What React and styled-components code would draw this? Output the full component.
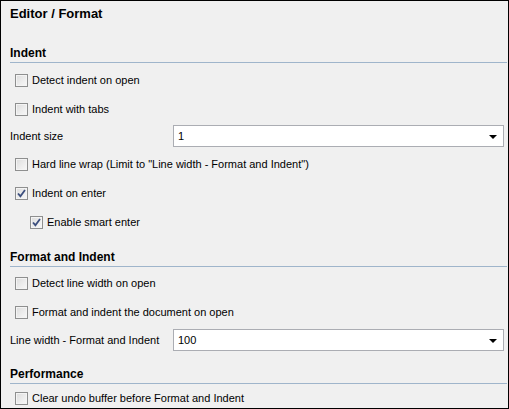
import React, { useState } from "react";
import styled, { createGlobalStyle } from "styled-components";

const GlobalStyle = createGlobalStyle`
  html, body {
    margin: 0;
    padding: 0;
    background: #f0f0f0;
  }
  * {
    box-sizing: border-box;
  }
`;

const Panel = styled.div`
  width: 509px;
  height: 409px;
  border: 1px solid #000;
  background: #f0f0f0;
  font-family: "Liberation Sans", Arial, sans-serif;
  font-size: 11px;
  color: #000;
  display: flex;
  flex-direction: column;
  overflow: hidden;
  padding-left: 9px;
`;

const Title = styled.div`
  height: 32px;
  flex: none;
  padding-top: 5px;
  font-size: 13px;
  font-weight: bold;
  line-height: 15px;
`;

const SectionHeader = styled.div`
  height: 30px;
  flex: none;
  display: flex;
  align-items: flex-end;
  padding-bottom: 2px;
  border-bottom: 1px solid #9fb5cb;
  font-size: 12px;
  font-weight: bold;
  line-height: 14px;
  margin-right: 1px;
`;

const Section = styled.div`
  display: flex;
  flex-direction: column;
  flex: none;
  padding-top: ${({ $top }) => $top}px;
`;

const CheckRow = styled.label`
  height: 29px;
  flex: none;
  display: flex;
  align-items: center;
  gap: 4px;
  padding-left: ${({ $level }) => 5 + ($level || 0) * 15}px;
  line-height: 13px;
  white-space: nowrap;
  cursor: default;
`;

const Box = styled.span`
  width: 13px;
  height: 13px;
  flex: none;
  border: 1px solid #8e8f8f;
  background: linear-gradient(135deg, #dcdcdc 0%, #eeeeee 60%, #f8f8f8 100%);
  box-shadow: inset 0 0 0 1px #f4f4f4;
  display: flex;
  align-items: center;
  justify-content: center;
`;

const FieldRow = styled.div`
  height: ${({ $height }) => $height}px;
  flex: none;
  display: flex;
  align-items: flex-start;
  padding-top: ${({ $top }) => $top}px;
`;

const FieldLabel = styled.span`
  width: 163px;
  flex: none;
  line-height: 22px;
  white-space: nowrap;
`;

const Select = styled.div`
  width: 331px;
  height: 22px;
  border: 1px solid #abadb3;
  background: #fff;
  display: flex;
  align-items: center;
  justify-content: space-between;
  padding: 0 6px 0 4px;
`;

const Arrow = styled.span`
  width: 0;
  height: 0;
  border-left: 4px solid transparent;
  border-right: 4px solid transparent;
  border-top: 4px solid #000;
  margin-top: 2px;
`;

const Checkbox = ({ label, checked, level }) => {
  const [on, setOn] = useState(!!checked);
  return (
    <CheckRow $level={level} onClick={() => setOn(!on)}>
      <Box>
        {on && (
          <svg width="9" height="9" viewBox="0 0 9 9">
            <path d="M1 4.5 L3.4 7.2 L8 1" fill="none" stroke="#3c4f7e" strokeWidth="1.8" />
          </svg>
        )}
      </Box>
      {label}
    </CheckRow>
  );
};

const Field = ({ label, value, top, height }) => (
  <FieldRow $top={top} $height={height}>
    <FieldLabel>{label}</FieldLabel>
    <Select>
      {value}
      <Arrow />
    </Select>
  </FieldRow>
);

export default function App() {
  return (
    <>
      <GlobalStyle />
      <Panel>
        <Title>Editor / Format</Title>

        <SectionHeader>Indent</SectionHeader>
        <Section $top={3}>
          <Checkbox label="Detect indent on open" />
          <Checkbox label="Indent with tabs" />
          <Field label="Indent size" value="1" top={1} height={26} />
          <Checkbox label={'Hard line wrap (Limit to "Line width - Format and Indent")'} />
          <Checkbox label="Indent on enter" checked />
          <Checkbox label="Enable smart enter" checked level={1} />
        </Section>

        <SectionHeader>Format and Indent</SectionHeader>
        <Section $top={2}>
          <Checkbox label="Detect line width on open" />
          <Checkbox label="Format and indent the document on open" />
          <Field label="Line width - Format and Indent" value="100" top={2} height={27} />
        </Section>

        <SectionHeader>Performance</SectionHeader>
        <Section $top={0}>
          <Checkbox label="Clear undo buffer before Format and Indent" />
        </Section>
      </Panel>
    </>
  );
}
